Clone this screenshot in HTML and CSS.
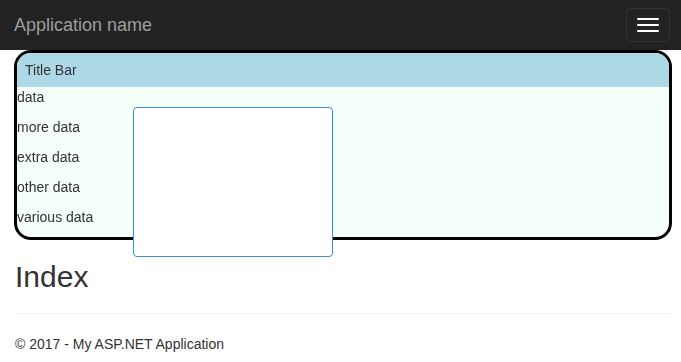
FILE: index.html
```html
<!DOCTYPE html>
<html lang="en">
<head>
    <meta charset="UTF-8">
    <meta name="viewport" content="width=device-width, initial-scale=1.0">
    <title>Index - My ASP.NET Application</title>
    <link rel="stylesheet" href="styles.css">
</head>
<body>

    <div class="navbar">
        <a class="navbar-brand" href="#">Application name</a>
        <button class="navbar-toggle" type="button">
            <span class="icon-bar"></span>
            <span class="icon-bar"></span>
            <span class="icon-bar"></span>
        </button>
    </div>

    <div class="body-content">
        <div class="panel-box">
            <div class="title-bar">Title Bar</div>
            <div class="row">data</div>
            <div class="row">more data</div>
            <div class="row">extra data</div>
            <div class="row">other data</div>
            <div class="row">various data</div>
            <textarea class="notes"></textarea>
        </div>

        <h2>Index</h2>

        <hr>
        <footer>
            <p>&copy; 2017 - My ASP.NET Application</p>
        </footer>
    </div>

</body>
</html>
```

FILE: styles.css
```css
body {
    font-family: "Liberation Sans", Arial, sans-serif;
    font-size: 14px;
    line-height: 20px;
    color: #333;
    background-color: #fff;
    margin: 0;
    padding-top: 50px;
}
.navbar {
    position: fixed;
    top: 0;
    left: 0;
    right: 0;
    height: 50px;
    background-color: #222;
    display: flex;
    justify-content: space-between;
    align-items: center;
    padding: 0 11px 0 14px;
}
.navbar-brand {
    color: #9d9d9d;
    font-size: 18px;
    text-decoration: none;
}
.navbar-toggle {
    width: 44px;
    height: 34px;
    background: transparent;
    border: 1px solid #333;
    border-radius: 4px;
    display: flex;
    flex-direction: column;
    justify-content: center;
    align-items: center;
    gap: 4px;
    padding: 0;
}
.icon-bar {
    display: block;
    width: 22px;
    height: 2px;
    background-color: #fff;
    border-radius: 1px;
}
.body-content {
    padding: 0 10px 0 15px;
}
.panel-box {
    position: relative;
    margin: 0 -1px 0 -1px;
    border: 3px solid #000;
    border-radius: 17px;
    background-color: #f5fffa;
    padding-bottom: 10px;
}
.title-bar {
    background-color: #add8e6;
    height: 34px;
    line-height: 34px;
    padding-left: 8px;
    border-radius: 14px 14px 0 0;
}
.row {
    height: 20px;
    margin-bottom: 10px;
}
.row:last-of-type {
    margin-bottom: 0;
}
.notes {
    position: absolute;
    left: 116px;
    top: 54px;
    width: 200px;
    height: 150px;
    box-sizing: border-box;
    margin: 0;
    border: 1px solid #3c8dd8;
    border-radius: 4px;
    background-color: #fff;
    resize: none;
}
h2 {
    font-size: 30px;
    font-weight: 500;
    line-height: 33px;
    margin: 20px 0 10px;
}
hr {
    margin: 20px 0;
    border: 0;
    border-top: 1px solid #eee;
}
footer p {
    margin: 0 0 10px;
}
```
